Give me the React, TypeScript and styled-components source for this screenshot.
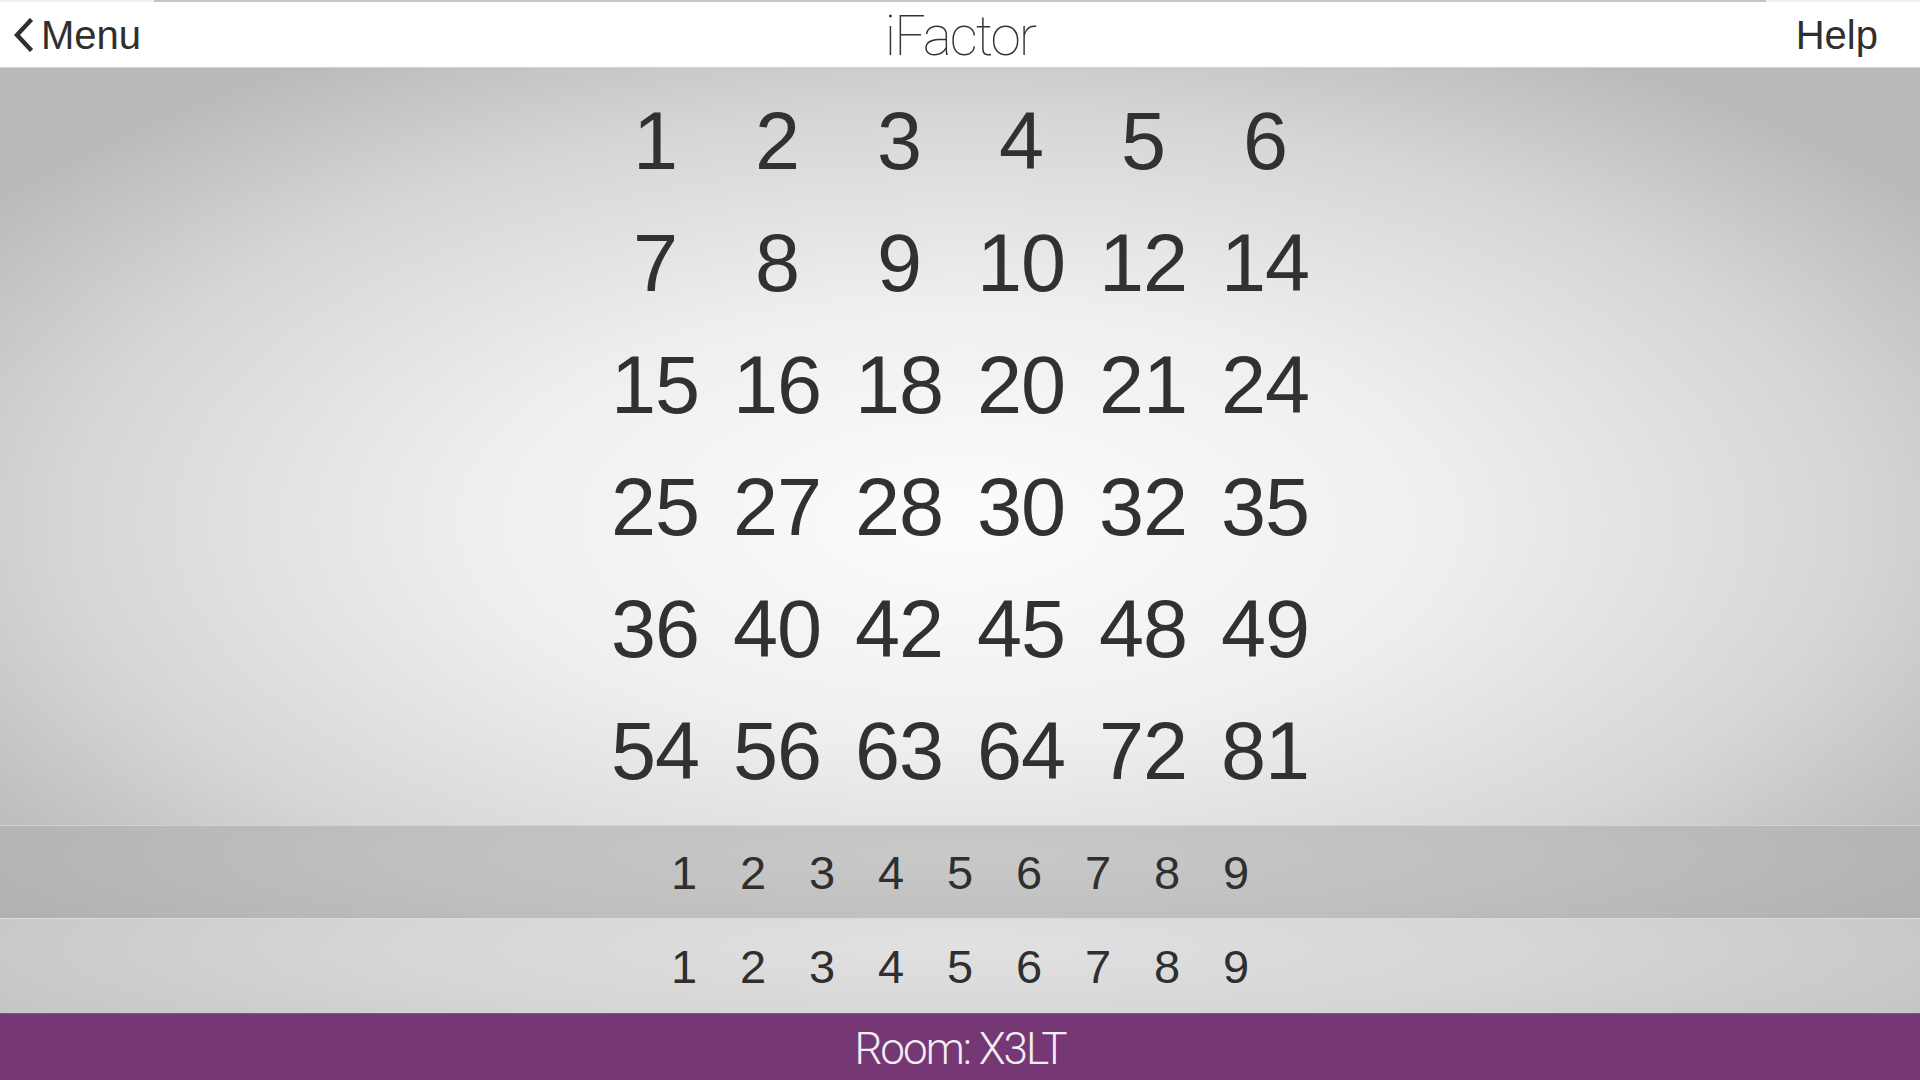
import React, { type ReactElement } from 'react'
import styled, { createGlobalStyle } from 'styled-components'

// 위쪽 큰 격자에 들어가는 숫자들 (구구단 곱 목록)
const products = [
  1, 2, 3, 4, 5, 6,
  7, 8, 9, 10, 12, 14,
  15, 16, 18, 20, 21, 24,
  25, 27, 28, 30, 32, 35,
  36, 40, 42, 45, 48, 49,
  54, 56, 63, 64, 72, 81,
];

const digits = [1, 2, 3, 4, 5, 6, 7, 8, 9];

const GlobalStyle = createGlobalStyle`
  html, body {
    margin: 0;
    padding: 0;
    overflow: hidden;
  }
  body {
    font-family: "Liberation Sans", Arial, sans-serif;
    color: #2f2f2f;
  }
`;

const App = (): ReactElement => {
  return (
    <>
      <GlobalStyle />
      <Page>
        {/* 상단 네비게이션 바 */}
        <Header>
          <Side>
            <NavButton>
              <svg width="22" height="34" viewBox="0 0 22 34" fill="none">
                <polyline points="18,3 5,17 18,31" stroke="#2f2f2f" strokeWidth="4.4" strokeLinecap="square" />
              </svg>
              Menu
            </NavButton>
          </Side>
          <Center>
            <Title>iFactor</Title>
          </Center>
          <Side $align="end">
            <NavButton>Help</NavButton>
          </Side>
        </Header>

        {/* 곱 목록 격자 */}
        <Board>
          <ProductGrid>
            {products.map((n) => (
              <Product key={n}>{n}</Product>
            ))}
          </ProductGrid>
        </Board>

        {/* 인수 선택 줄 두 개 */}
        <FactorStrip $variant="dark">
          <DigitRow>
            {digits.map((d) => (
              <Digit key={d}>{d}</Digit>
            ))}
          </DigitRow>
        </FactorStrip>
        <FactorStrip $variant="light">
          <DigitRow>
            {digits.map((d) => (
              <Digit key={d}>{d}</Digit>
            ))}
          </DigitRow>
        </FactorStrip>

        <Footer>Room: X3LT</Footer>
      </Page>
    </>
  )
};

export default App;

const Page = styled.div`
  width: 100vw;
  height: 100vh;
  display: flex;
  flex-direction: column;
  background: #ffffff;
`;

const Header = styled.header`
  height: 68px;
  flex: 0 0 68px;
  display: grid;
  grid-template-columns: 154px 1fr 154px;
  background: #ffffff;
  border-bottom: 1px solid #d4d4d4;
  box-sizing: border-box;
`;

const Side = styled.div<{ $align?: 'end' }>`
  display: flex;
  align-items: center;
  justify-content: ${(p) => (p.$align === 'end' ? 'flex-end' : 'flex-start')};
  padding: ${(p) => (p.$align === 'end' ? '0 42px 0 0' : '0 0 0 12px')};
  border-top: 2px solid #f1f1f1;
`;

const Center = styled.div`
  display: flex;
  align-items: center;
  justify-content: center;
  border-top: 2px solid #c6c6c6;
`;

const NavButton = styled.div`
  display: flex;
  align-items: center;
  gap: 7px;
  font-size: 40px;
  color: #2f2f2f;
  line-height: 1;
  margin-top: 1px;
`;

const Title = styled.h1`
  margin: 4px 0 0;
  font-family: Roboto, "Liberation Sans", sans-serif;
  font-weight: 100;
  font-size: 55px;
  letter-spacing: -2px;
  color: #333333;
  line-height: 1;
`;

const Board = styled.main`
  flex: 1;
  display: flex;
  justify-content: center;
  align-items: center;
  background: radial-gradient(ellipse 62% 72% at 50% 60%, #fcfcfc 0%, #efefef 40%, #d6d6d6 75%, #bababa 100%);
`;

const ProductGrid = styled.div`
  display: grid;
  grid-template-columns: repeat(6, 122px);
  grid-auto-rows: 122px;
`;

const Product = styled.div`
  display: flex;
  align-items: center;
  justify-content: center;
  font-size: 81px;
  color: #313131;
  line-height: 1;
  letter-spacing: -1px;
`;

const FactorStrip = styled.div<{ $variant: 'dark' | 'light' }>`
  flex: 0 0 ${(p) => (p.$variant === 'dark' ? '93px' : '95px')};
  display: flex;
  justify-content: center;
  align-items: center;
  border-top: 1px solid ${(p) => (p.$variant === 'dark' ? '#d2d2d2' : '#dadada')};
  box-sizing: border-box;
  background: ${(p) =>
    p.$variant === 'dark'
      ? 'radial-gradient(ellipse 60% 160% at 50% 30%, #c9c9c9 0%, #bfbfbf 50%, #afafaf 100%)'
      : 'radial-gradient(ellipse 60% 160% at 50% 30%, #e1e1e1 0%, #d6d6d6 50%, #c3c3c3 100%)'};
`;

const DigitRow = styled.div`
  display: grid;
  grid-template-columns: repeat(9, 69px);
`;

const Digit = styled.div`
  text-align: center;
  font-size: 47px;
  line-height: 1;
  color: #2f2f2f;
`;

const Footer = styled.footer`
  flex: 0 0 67px;
  display: flex;
  align-items: center;
  justify-content: center;
  padding-top: 4px;
  background: #763874;
  border-top: 1px solid #8a4e88;
  box-sizing: border-box;
  color: #f4eef4;
  font-family: Roboto, "Liberation Sans", sans-serif;
  font-weight: 300;
  font-size: 44px;
  letter-spacing: -2px;
`;
